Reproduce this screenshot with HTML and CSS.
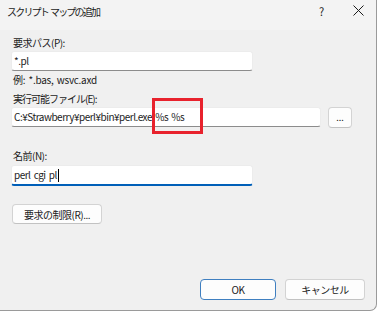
FILE: index.html
```html
<!DOCTYPE html>
<html lang="ja">
<head>
<meta charset="utf-8">
<link rel="stylesheet" href="styles.css">
</head>
<body>
<div class="window">
  <div class="titlebar">
    <span class="title">スクリプト マップの追加</span>
    <span class="help">?</span>
    <span class="close"><svg width="11" height="11" viewBox="0 0 11 11"><path d="M0.5 0.5 L10.5 10.5 M10.5 0.5 L0.5 10.5" stroke="#1a1a1a" stroke-width="1" fill="none"/></svg></span>
  </div>
  <div class="content">
    <div class="label l1">要求パス(P):</div>
    <div class="input short">*.pl</div>
    <div class="hint">例: *.bas, wsvc.axd</div>
    <div class="label l2">実行可能ファイル(E):</div>
    <div class="row">
      <div class="input long">C:¥Strawberry¥perl¥bin¥perl.exe %s %s</div>
      <div class="btn browse">...</div>
    </div>
    <div class="label l3">名前(N):</div>
    <div class="input short focused">perl cgi pl<span class="caret"></span></div>
    <div class="btn limit">要求の制限(R)...</div>
    <div class="footer">
      <div class="btn ok">OK</div>
      <div class="btn cancel">キャンセル</div>
    </div>
  </div>
  <div class="highlight"></div>
</div>
</body>
</html>
```

FILE: styles.css
```css
html, body {
  margin: 0;
  padding: 0;
  background: #ffffff;
}
body {
  width: 379px;
  height: 313px;
  overflow: hidden;
  font-family: "Noto Sans CJK JP", sans-serif;
  font-size: 10px;
  letter-spacing: -0.5px;
  word-spacing: 1.5px;
  color: #1b1b1b;
}
.window {
  position: relative;
  width: 377px;
  height: 311px;
  background: #f0f0f0;
  border-right: 1px solid #9a9a9a;
  border-bottom: 1px solid #9a9a9a;
  border-bottom-right-radius: 7px;
  box-sizing: border-box;
  display: flex;
  flex-direction: column;
}
.titlebar {
  height: 30px;
  background: #f3f3f3;
  display: flex;
  align-items: center;
  padding-left: 7px;
  flex-shrink: 0;
}
.title {
  line-height: 16px;
  margin-top: -6px;
  letter-spacing: -1.8px;
  flex: 1;
}
.help {
  font-size: 11px;
  margin-top: -8px;
  width: 34px;
}
.close {
  display: flex;
  margin-top: -9px;
  margin-right: 12px;
}
.content {
  padding: 0 11px;
  display: flex;
  flex-direction: column;
  flex: 1;
}
.label, .hint {
  line-height: 16px;
  height: 16px;
  padding-left: 2px;
}
.l1 { margin-top: 5px; }
.hint {
  margin-top: 1px;
  letter-spacing: -0.3px;
}
.l2 {
  margin-top: 3px;
  letter-spacing: -1px;
}
.l3 { margin-top: 20px; }
.input {
  box-sizing: border-box;
  height: 20px;
  background: #ffffff;
  border: 1px solid #ececec;
  border-bottom: 1px solid #8c8c8c;
  border-radius: 3px;
  line-height: 18px;
  padding-left: 2px;
  white-space: nowrap;
  overflow: hidden;
}
.short { width: 242px; }
.long { width: 310px; }
.focused {
  height: 21px;
  margin-top: 1px;
  border-bottom: 2px solid #005fb8;
  display: flex;
  align-items: center;
}
.caret {
  display: inline-block;
  width: 1px;
  height: 13px;
  background: #000;
  margin-left: 1px;
}
.row {
  display: flex;
  align-items: flex-start;
  gap: 7px;
}
.btn {
  box-sizing: border-box;
  background: #fdfdfd;
  border: 1px solid #d3d3d3;
  border-bottom-color: #c2c2c2;
  border-radius: 4px;
  display: flex;
  align-items: center;
  justify-content: center;
}
.browse {
  width: 24px;
  height: 21px;
  font-size: 9px;
  line-height: 9px;
  letter-spacing: 0;
}
.limit {
  margin-top: 18px;
  width: 90px;
  height: 20px;
  margin-left: 1px;
}
.footer {
  margin-top: auto;
  margin-bottom: 10px;
  display: flex;
  justify-content: flex-end;
  gap: 9px;
}
.ok, .cancel {
  height: 21px;
}
.ok {
  width: 76px;
  border: 1px solid #3f7fc0;
}
.cancel {
  width: 80px;
}
.highlight {
  position: absolute;
  left: 152px;
  top: 98px;
  width: 51px;
  height: 36px;
  box-sizing: border-box;
  border: 3px solid #e8222d;
}
```
